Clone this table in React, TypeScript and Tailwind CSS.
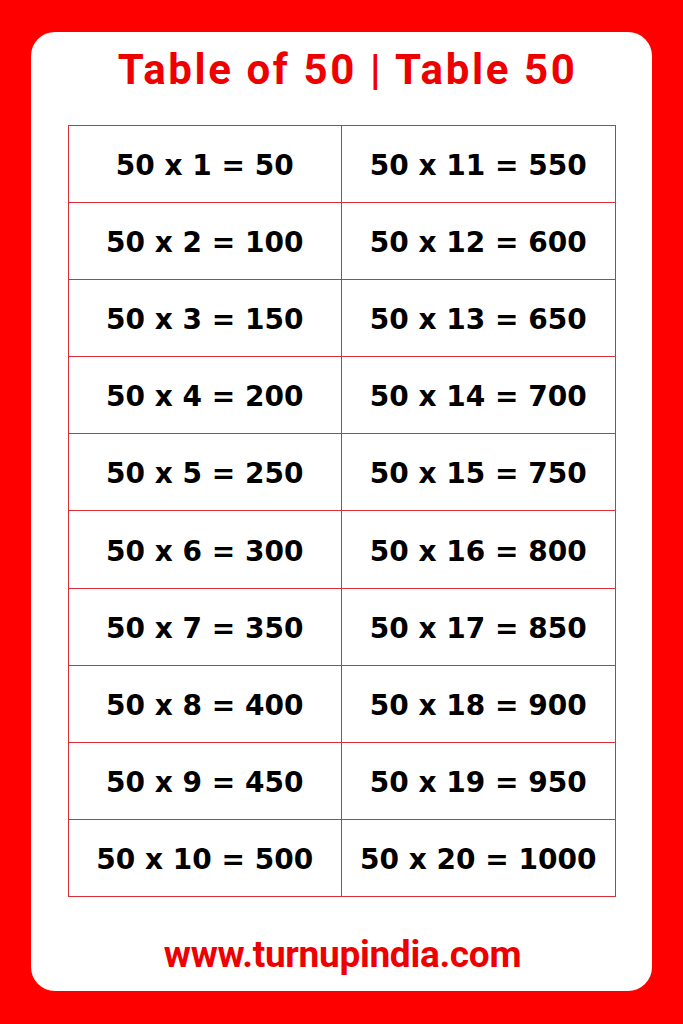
import React from "react";

const rows = Array.from({ length: 10 }, (_, i) => i + 1);

export default function App() {
  return (
    <div className="w-[683px] h-[1024px] bg-[#ff0000] pt-[32px] pl-[31px]">
      <div className="w-[621px] h-[959px] bg-white rounded-[24px] flex flex-col items-center">
        <h1
          className="mt-[16px] h-[44px] text-[42px] leading-[44px] font-bold text-[#ee0000] tracking-[2.6px] pl-[12px] whitespace-nowrap"
          style={{ fontFamily: "Roboto, 'Liberation Sans', sans-serif" }}
        >
          Table of 50 | Table 50
        </h1>
        <table
          className="mt-[33px] w-[548px] h-[772px] border-collapse border-[1.5px] border-[#dc2f35] table-fixed"
          style={{ fontFamily: "'DejaVu Sans', Roboto, sans-serif" }}
        >
          <tbody>
            {rows.map((n) => (
              <tr key={n}>
                <td className="border-[1.5px] border-[#dc2f35] pt-[4px] text-center text-[28px] font-bold text-black align-middle whitespace-nowrap">
                  50 x {n} = {50 * n}
                </td>
                <td className="border-[1.5px] border-[#dc2f35] pt-[4px] text-center text-[28px] font-bold text-black align-middle whitespace-nowrap">
                  50 x {n + 10} = {50 * (n + 10)}
                </td>
              </tr>
            ))}
          </tbody>
        </table>
        <div
          className="mt-[38px] text-[37px] leading-[40px] font-bold text-[#ee0000] pl-[2px] tracking-[-0.3px]"
          style={{ fontFamily: "Roboto, 'Liberation Sans', sans-serif" }}
        >
          www.turnupindia.com
        </div>
      </div>
    </div>
  );
}
